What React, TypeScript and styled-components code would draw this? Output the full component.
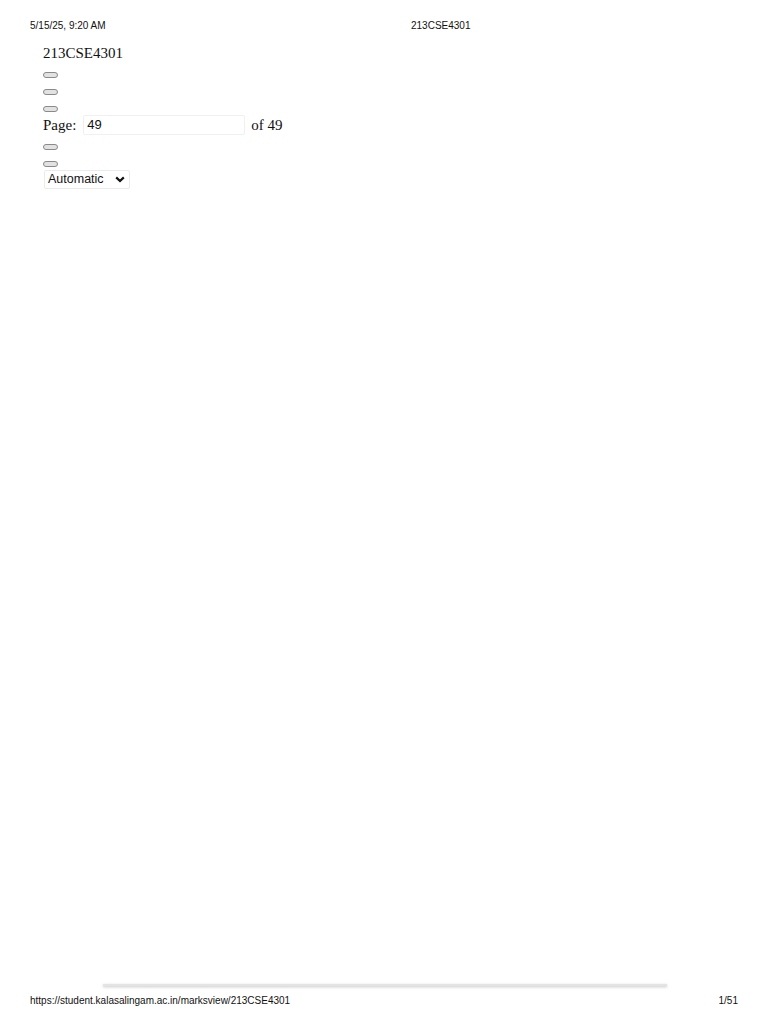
import React from 'react';
import styled, {createGlobalStyle} from 'styled-components';

const GlobalStyle = createGlobalStyle`
  html, body {
    margin: 0;
    padding: 0;
    background: #ffffff;
  }
`;

const Sheet = styled.div`
  display: flex;
  flex-direction: column;
  width: 768px;
  height: 1024px;
  overflow: hidden;
  color: #111;
`;

const PrintHeader = styled.div`
  display: grid;
  grid-template-columns: 381px auto;
  padding: 19px 30px 0;
  font-family: 'Liberation Sans', Arial, sans-serif;
  font-size: 10px;
  line-height: 13px;
`;

const Content = styled.div`
  display: flex;
  flex-direction: column;
  align-items: flex-start;
  padding: 12px 0 0 43px;
  font-family: 'Liberation Serif', 'Times New Roman', serif;
  font-size: 15px;
`;

const Title = styled.div`
  line-height: 18px;
`;

const TinyButton = styled.button<{$gap: number}>`
  display: block;
  width: 15px;
  height: 6px;
  margin: ${p => p.$gap}px 0 0;
  padding: 0;
  border: 1px solid #8a8a8a;
  border-radius: 3px;
  background: #e2e2e2;
`;

const PageRow = styled.div`
  display: flex;
  align-items: center;
  margin-top: 3px;
  height: 20px;
  line-height: 18px;
`;

const PageInput = styled.div`
  box-sizing: border-box;
  width: 162px;
  height: 20px;
  margin: 0 6px 0 7px;
  padding: 0 3px;
  border: 1px solid #f0f0f0;
  border-radius: 2px;
  font-family: 'Liberation Sans', Arial, sans-serif;
  font-size: 13px;
  line-height: 18px;
`;

const Select = styled.div`
  box-sizing: border-box;
  display: flex;
  align-items: center;
  justify-content: space-between;
  width: 86px;
  height: 19px;
  margin: 3px 0 0 1px;
  padding: 0 4px 0 3px;
  border: 1px solid #ebebeb;
  border-radius: 2px;
  font-family: 'Liberation Sans', Arial, sans-serif;
  font-size: 12.5px;
  line-height: 17px;
`;

const Spacer = styled.div`
  flex: 1;
`;

const ShadowLine = styled.div`
  width: 564px;
  height: 2px;
  margin-left: 103px;
  background: #e4e4e4;
  box-shadow: 0 1px 3px rgba(0, 0, 0, 0.25);
`;

const PrintFooter = styled.div`
  display: flex;
  justify-content: space-between;
  padding: 8px 30px 17px;
  font-family: 'Liberation Sans', Arial, sans-serif;
  font-size: 10px;
  line-height: 13px;
`;

const Chevron = () => (
  <svg width="10" height="7" viewBox="0 0 10 7">
    <path d="M1.2 1.4 L5 5 L8.8 1.4" fill="none" stroke="#111" strokeWidth="2.2" />
  </svg>
);

export default function App() {
  return (
    <Sheet>
      <GlobalStyle />
      <PrintHeader>
        <span>5/15/25, 9:20 AM</span>
        <span>213CSE4301</span>
      </PrintHeader>

      <Content>
        <Title>213CSE4301</Title>
        <TinyButton $gap={10} />
        <TinyButton $gap={11} />
        <TinyButton $gap={11} />
        <PageRow>
          <span>Page:</span>
          <PageInput>49</PageInput>
          <span>of 49</span>
        </PageRow>
        <TinyButton $gap={9} />
        <TinyButton $gap={11} />
        <Select>
          <span>Automatic</span>
          <Chevron />
        </Select>
      </Content>

      <Spacer />
      <ShadowLine />
      <PrintFooter>
        <span>https://student.kalasalingam.ac.in/marksview/213CSE4301</span>
        <span>1/51</span>
      </PrintFooter>
    </Sheet>
  );
}
